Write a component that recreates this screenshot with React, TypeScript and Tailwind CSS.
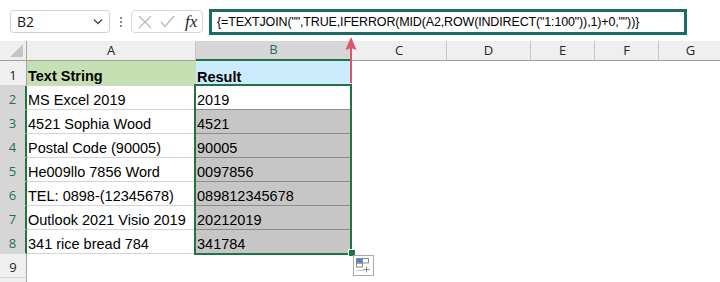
import React from "react";

const A = [
  "Text String",
  "MS Excel 2019",
  "4521 Sophia Wood",
  "Postal Code (90005)",
  "He009llo 7856 Word",
  "TEL: 0898-(12345678)",
  "Outlook 2021 Visio 2019",
  "341 rice bread 784",
];
const B = ["Result", "2019", "4521", "90005", "0097856", "089812345678", "20212019", "341784"];

function RowHeader({ r }: { r: number }) {
  const sel = r >= 2 && r <= 8;
  return (
    <div
      className={
        "flex items-end justify-center border-b border-b-[#d6d6d6] text-[13px] leading-[17px] font-['Open_Sans',sans-serif] " +
        (sel
          ? "bg-[#d6d6d6] text-[#217346] border-r-2 border-r-[#217346]"
          : "bg-[#efefef] text-[#262626] border-r border-r-[#a6a6a6]")
      }
    >
      <span className="pb-[1px]">{r}</span>
    </div>
  );
}

function Cells({ r }: { r: number }) {
  const i = r - 1;
  const cells: React.ReactNode[] = [];
  if (r <= 8) {
    cells.push(
      <div
        key="a"
        className={
          "flex items-end pl-[1px] border-b border-b-[#d4d4d4] text-[14.5px] leading-[17px] text-black whitespace-nowrap " +
          (r === 1 ? "bg-[#c6e0b4] font-bold" : "bg-white")
        }
      >
        {A[i]}
      </div>
    );
    let bcls = "";
    if (r === 1) bcls = "bg-[#ccebfd] font-bold border-r border-r-[#c8c8c8]";
    else if (r === 2) bcls = "bg-white border-b border-b-[#8c8c8c]";
    else bcls = "bg-[#c6c6c6] border-b border-b-[#8c8c8c]";
    cells.push(
      <div
        key="b"
        className={"flex items-end pl-[1px] text-[14.5px] leading-[17px] text-black whitespace-nowrap " + bcls}
      >
        {B[i]}
      </div>
    );
  } else {
    cells.push(<div key="a" className="bg-white" />);
    cells.push(<div key="b" className="bg-white" />);
  }
  for (const k of ["c", "d", "e", "f", "g"]) cells.push(<div key={k} className="bg-white" />);
  return <>{cells}</>;
}

export default function App() {
  const cols = ["A", "B", "C", "D", "E", "F", "G"];
  return (
    <div className="relative w-[720px] h-[282px] overflow-hidden bg-white font-['Liberation_Sans',Arial,sans-serif]">
      {/* formula bar */}
      <div className="flex items-start h-[41px]">
        <div className="ml-[10px] mt-[10px] w-[100px] h-[23px] border border-[#d0d0d0] rounded-[4px] flex items-center justify-between pl-[6px] pr-[6px]">
          <span className="text-[14px] text-[#1a1a1a] font-['Open_Sans',sans-serif]">B2</span>
          <svg width="10" height="7" viewBox="0 0 10 7">
            <path d="M1 1.5 L5 5.5 L9 1.5" fill="none" stroke="#444" strokeWidth="1.3" />
          </svg>
        </div>
        <div className="ml-[10px] mt-[17px] flex flex-col gap-[2px]">
          <div className="w-[2px] h-[2px] bg-[#8a8a8a]" />
          <div className="w-[2px] h-[2px] bg-[#8a8a8a]" />
          <div className="w-[2px] h-[2px] bg-[#8a8a8a]" />
        </div>
        <div className="ml-[9px] mt-[10px] w-[72px] h-[23px] border border-[#d6d6d6] rounded-[4px] flex items-center pl-[6px]">
          <svg width="14" height="14" viewBox="0 0 14 14">
            <path d="M1 1 L13 13 M13 1 L1 13" stroke="#b8b8b8" strokeWidth="1.2" fill="none" />
          </svg>
          <svg className="ml-[8px]" width="15" height="13" viewBox="0 0 15 13">
            <path d="M1 7 L5 11.5 L14 1" stroke="#b8b8b8" strokeWidth="1.2" fill="none" />
          </svg>
          <span className="ml-[10px] text-[17px] leading-[17px] italic text-[#222] font-['Liberation_Serif',serif]">
            fx
          </span>
        </div>
        <div className="ml-[6px] mt-[9px] w-[478px] h-[26px] border-[3px] border-[#1d6b65] flex items-center pl-[5px]">
          <span className="text-[12.5px] tracking-[-0.15px] text-black whitespace-nowrap">
            {'{=TEXTJOIN("",TRUE,IFERROR(MID(A2,ROW(INDIRECT("1:100")),1)+0,""))}'}
          </span>
        </div>
      </div>

      {/* sheet */}
      <div className="grid grid-cols-[27px_169px_156px_95px_84px_64px_64px_64px] grid-rows-[20px_25px_24px_24px_24px_24px_24px_24px_24px_24px_24px]">
        <div className="bg-[#efefef] border-r border-r-[#a6a6a6] border-b border-b-[#9e9e9e] flex items-end justify-end pr-[3px] pb-[3px]">
          <svg width="13" height="13" viewBox="0 0 13 13">
            <path d="M13 0 L13 13 L0 13 Z" fill="#c4c4c4" />
          </svg>
        </div>
        {cols.map((c) => (
          <div
            key={c}
            className={
              "flex items-center justify-center text-[13px] font-['Open_Sans',sans-serif] border-r border-r-[#c6c6c6] " +
              (c === "B"
                ? "bg-[#d6d6d6] text-[#217346] border-b-2 border-b-[#217346]"
                : "bg-[#efefef] text-[#262626] border-b border-b-[#9e9e9e]")
            }
          >
            {c}
          </div>
        ))}
        {[1, 2, 3, 4, 5, 6, 7, 8, 9, 10].map((r) => (
          <React.Fragment key={r}>
            <RowHeader r={r} />
            <Cells r={r} />
          </React.Fragment>
        ))}
      </div>

      {/* selection border */}
      <div className="absolute left-[194px] top-[84px] w-[158px] h-[171px] border-2 border-[#217346]" />
      {/* fill handle */}
      <div className="absolute left-[348px] top-[249px] w-[8px] h-[8px] bg-[#217346] border border-white" />
      {/* paste options */}
      <div className="absolute left-[353px] top-[255px] w-[21px] h-[21px] border border-[#a8a8a8] bg-white">
        <svg width="19" height="19" viewBox="0 0 19 19">
          <rect x="2.5" y="2.5" width="6" height="4.5" fill="#3b82f6" stroke="#8a8a8a" strokeWidth="1" />
          <rect x="8.5" y="2.5" width="6" height="4.5" fill="none" stroke="#8a8a8a" strokeWidth="1" />
          <rect x="2.5" y="7" width="6" height="4" fill="none" stroke="#8a8a8a" strokeWidth="1" />
          <path d="M2.5 14.5 L9.5 14.5" stroke="#8a8a8a" strokeWidth="1" strokeDasharray="1 1" />
          <path d="M12.5 10.5 L12.5 16.5 M9.5 13.5 L15.5 13.5" stroke="#8a8a8a" strokeWidth="1" />
        </svg>
      </div>
      {/* red arrow */}
      <svg className="absolute left-[344px] top-[35px]" width="14" height="50" viewBox="0 0 14 50">
        <path d="M7 12 L7 48" stroke="#d9566b" strokeWidth="2" />
        <path d="M7 2 L12.5 15 L7 13 L1.5 15 Z" fill="#d9566b" />
      </svg>
    </div>
  );
}
